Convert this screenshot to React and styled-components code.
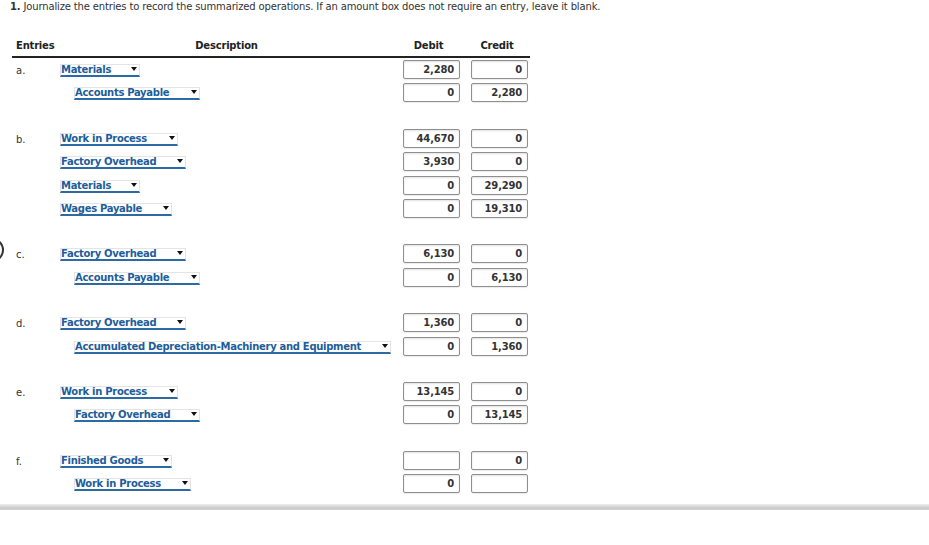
import React from 'react';
import styled, { createGlobalStyle } from 'styled-components';

const Global = createGlobalStyle`
  html, body { margin: 0; padding: 0; background: #fff; }
  body { font-family: "DejaVu Sans", Verdana, sans-serif; color: #333; }
`;

const Page = styled.div`
  position: relative;
  width: 929px;
  height: 545px;
  overflow: hidden;
`;

const Title = styled.p`
  margin: 0;
  padding: 1px 0 0 10px;
  font-size: 10px;
  line-height: 12px;
  letter-spacing: -0.15px;
  color: #333;
  b { font-weight: bold; }
`;

const Table = styled.div`
  margin: 27px 0 0 12px;
  width: 518px;
`;

const HeaderRow = styled.div`
  display: flex;
  padding: 0 0 4px 4px;
  border-bottom: 2px solid #222;
  font-size: 10px;
  font-weight: bold;
  line-height: 12px;
  letter-spacing: -0.2px;
  color: #222;
`;

const HeadCell = styled.div`
  width: ${p => p.$w}px;
  margin-left: ${p => p.$ml || 0}px;
  text-align: ${p => p.$align || 'left'};
  padding-right: ${p => p.$pr || 0}px;
  box-sizing: border-box;
`;

const Body = styled.div`
  display: flex;
  flex-direction: column;
  gap: 22px;
  padding: 1px 0 0 4px;
`;

const Group = styled.div`
  display: flex;
  flex-direction: column;
`;

const Row = styled.div`
  display: flex;
  align-items: flex-start;
  height: 23.4px;
`;

const Label = styled.div`
  width: 44px;
  font-size: 10px;
  line-height: 12px;
  margin-top: 6px;
  color: #333;
`;

const Desc = styled.div`
  width: 343px;
  padding-left: ${p => (p.$indent ? 14 : 0)}px;
  box-sizing: border-box;
`;

const Select = styled.div`
  display: flex;
  justify-content: space-between;
  align-items: flex-start;
  width: ${p => p.$w}px;
  height: 13px;
  margin-top: 5px;
  box-sizing: border-box;
  border: 1px solid #e4e4e4;
  border-bottom: 2px solid #2c6aa3;
  font-size: 10px;
  font-weight: bold;
  line-height: 10px;
  letter-spacing: -0.3px;
  color: #1d5d9b;
  white-space: nowrap;
`;

const Arrow = styled.span`
  width: 0;
  height: 0;
  margin: 2px 2px 0 0;
  border-left: 3px solid transparent;
  border-right: 3px solid transparent;
  border-top: 4px solid #111;
`;

const Amount = styled.div`
  width: 57px;
  height: 19px;
  margin-top: 1px;
  margin-left: ${p => p.$ml || 0}px;
  box-sizing: border-box;
  border: 1px solid #8f8f8f;
  border-radius: 2px;
  box-shadow: inset 0 1px 2px rgba(0, 0, 0, 0.12), 0 1px 1px rgba(0, 0, 0, 0.08);
  text-align: right;
  padding-right: 5px;
  font-size: 10px;
  font-weight: bold;
  line-height: 17px;
  letter-spacing: -0.2px;
  color: #333;
`;

const Separator = styled.div`
  margin-top: 8px;
  height: 6px;
  background: linear-gradient(to bottom, #eeeeee, #c8c8c8 70%, #d6d6d6);
`;

const EdgeCircle = styled.svg`
  position: absolute;
  left: 0;
  top: 237px;
`;

const groups = [
  {
    label: 'a.',
    rows: [
      { name: 'Materials', w: 80, d: '2,280', c: '0' },
      { name: 'Accounts Payable', w: 126, indent: true, d: '0', c: '2,280' },
    ],
  },
  {
    label: 'b.',
    rows: [
      { name: 'Work in Process', w: 118, d: '44,670', c: '0' },
      { name: 'Factory Overhead', w: 126, d: '3,930', c: '0' },
      { name: 'Materials', w: 80, d: '0', c: '29,290' },
      { name: 'Wages Payable', w: 112, d: '0', c: '19,310' },
    ],
  },
  {
    label: 'c.',
    rows: [
      { name: 'Factory Overhead', w: 126, d: '6,130', c: '0' },
      { name: 'Accounts Payable', w: 126, indent: true, d: '0', c: '6,130' },
    ],
  },
  {
    label: 'd.',
    rows: [
      { name: 'Factory Overhead', w: 126, d: '1,360', c: '0' },
      {
        name: 'Accumulated Depreciation-Machinery and Equipment',
        w: 317,
        indent: true,
        d: '0',
        c: '1,360',
      },
    ],
  },
  {
    label: 'e.',
    rows: [
      { name: 'Work in Process', w: 118, d: '13,145', c: '0' },
      { name: 'Factory Overhead', w: 126, indent: true, d: '0', c: '13,145' },
    ],
  },
  {
    label: 'f.',
    rows: [
      { name: 'Finished Goods', w: 112, d: '', c: '0' },
      { name: 'Work in Process', w: 117, indent: true, d: '0', c: '' },
    ],
  },
];

export default function App() {
  return (
    <Page>
      <Global />
      <Title>
        <b>1.</b> Journalize the entries to record the summarized operations. If an amount box does not require an entry, leave it blank.
      </Title>
      <Table>
        <HeaderRow>
          <HeadCell $w={44}>Entries</HeadCell>
          <HeadCell $w={343} $align="center" $pr={10}>Description</HeadCell>
          <HeadCell $w={57} $align="center" $pr={6}>Debit</HeadCell>
          <HeadCell $w={57} $ml={11} $align="center" $pr={5}>Credit</HeadCell>
        </HeaderRow>
        <Body>
          {groups.map(g => (
            <Group key={g.label}>
              {g.rows.map((r, i) => (
                <Row key={i}>
                  <Label>{i === 0 ? g.label : ''}</Label>
                  <Desc $indent={r.indent}>
                    <Select $w={r.w}>
                      <span>{r.name}</span>
                      <Arrow />
                    </Select>
                  </Desc>
                  <Amount>{r.d}</Amount>
                  <Amount $ml={11}>{r.c}</Amount>
                </Row>
              ))}
            </Group>
          ))}
        </Body>
      </Table>
      <Separator />
      <EdgeCircle width="5" height="26" viewBox="0 0 5 26">
        <circle cx="-8" cy="13" r="11" fill="none" stroke="#333" strokeWidth="2" />
      </EdgeCircle>
    </Page>
  );
}
